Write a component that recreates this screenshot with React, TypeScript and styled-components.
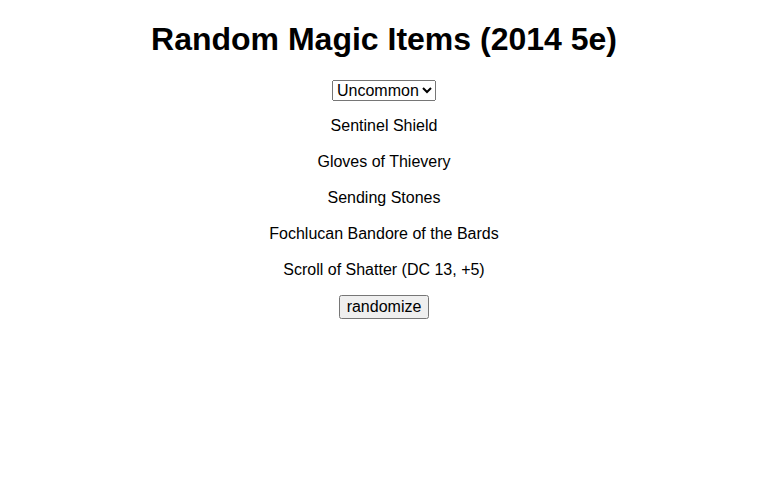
import React, { useState } from "react";
import styled, { createGlobalStyle } from "styled-components";

const GlobalStyle = createGlobalStyle`
  body {
    margin: 8px;
    font-family: "Liberation Sans", Arial, sans-serif;
    color: #000;
    background: #fff;
  }
`;

const Page = styled.main`
  display: flex;
  flex-direction: column;
  align-items: center;
  text-align: center;
`;

const Title = styled.h1`
  font-size: 32px;
  font-weight: bold;
  margin: 13px 0 22px;
`;

const RaritySelect = styled.select`
  font: inherit;
  font-size: 16px;
  margin: 0;
`;

const ItemList = styled.div`
  display: flex;
  flex-direction: column;
  align-items: center;
  padding-top: 15px;
`;

const Item = styled.p`
  margin: 0 0 16px;
  font-size: 16px;
  line-height: 20px;

  &:last-child {
    margin-bottom: 15px;
  }
`;

const RandomizeButton = styled.button`
  font: inherit;
  font-size: 16px;
  margin: 0;
`;

const rarities = ["Common", "Uncommon", "Rare", "Very Rare", "Legendary"];

const initialItems = [
  "Sentinel Shield",
  "Gloves of Thievery",
  "Sending Stones",
  "Fochlucan Bandore of the Bards",
  "Scroll of Shatter (DC 13, +5)",
];

export default function App() {
  const [rarity, setRarity] = useState("Uncommon");
  const [items] = useState(initialItems);

  return (
    <Page>
      <GlobalStyle />
      <Title>Random Magic Items (2014 5e)</Title>
      <RaritySelect value={rarity} onChange={(e) => setRarity(e.target.value)}>
        {rarities.map((r) => (
          <option key={r} value={r}>
            {r}
          </option>
        ))}
      </RaritySelect>
      <ItemList>
        {items.map((item, idx) => (
          <Item key={idx}>{item}</Item>
        ))}
      </ItemList>
      <RandomizeButton type="button">randomize</RandomizeButton>
    </Page>
  );
}
